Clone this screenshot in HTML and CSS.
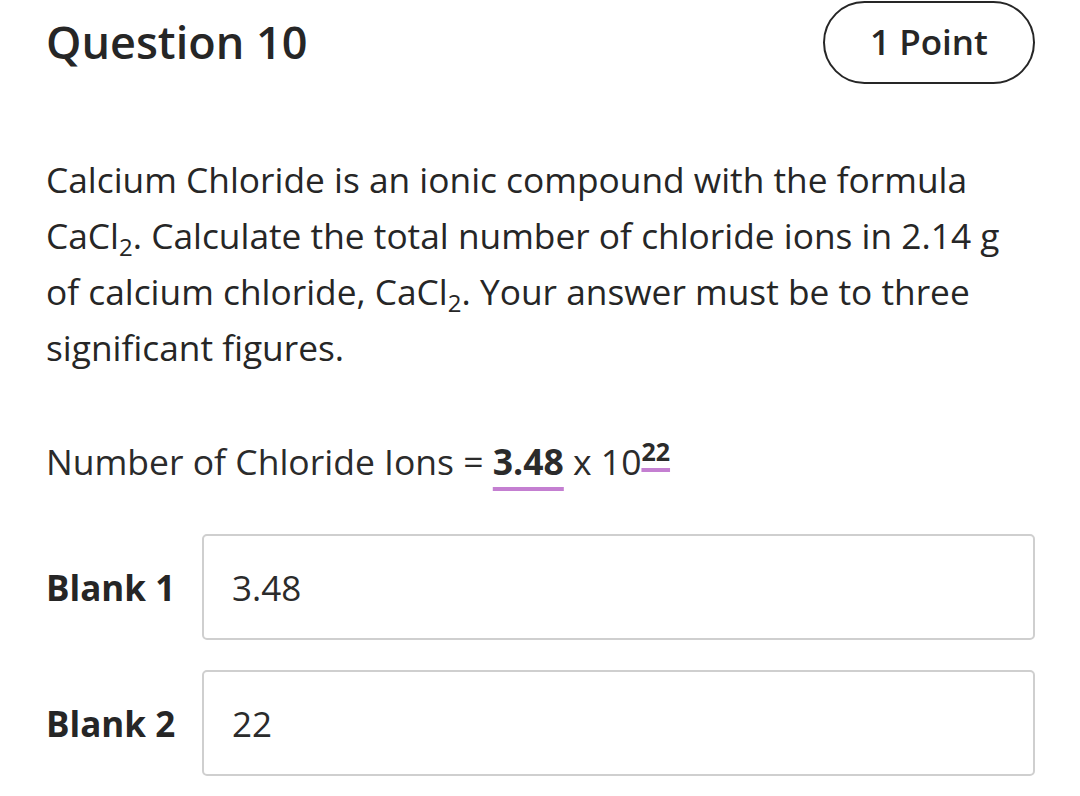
FILE: index.html
```html
<!DOCTYPE html>
<html>
<head>
<meta charset="utf-8">
<link rel="stylesheet" href="styles.css">
</head>
<body>
<div class="page">
  <header class="head">
    <h1 class="title">Question 10</h1>
    <div class="points">1 Point</div>
  </header>
  <p class="prompt">Calcium Chloride is an ionic compound with the formula CaCl<sub>2</sub>. Calculate the total number of chloride ions in 2.14 g of calcium chloride, CaCl<sub>2</sub>. Your answer must be to three significant figures.</p>
  <p class="equation">Number of Chloride Ions = <span class="blank">3.48</span> x 10<sup class="blank sup">22</sup></p>
  <div class="fields">
    <div class="field">
      <span class="label">Blank 1</span>
      <div class="input">3.48</div>
    </div>
    <div class="field">
      <span class="label">Blank 2</span>
      <div class="input">22</div>
    </div>
  </div>
</div>
</body>
</html>
```
FILE: styles.css
```css
html, body {
  margin: 0;
  padding: 0;
  background: #fff;
}
body {
  font-family: "Open Sans", "Noto Sans", sans-serif;
  color: #262626;
}
.page {
  padding: 0 46px 0 46px;
  width: 1080px;
  box-sizing: border-box;
}
.head {
  display: flex;
  justify-content: space-between;
  align-items: flex-start;
  padding-top: 1px;
}
.title {
  margin: 0;
  padding-top: 16px;
  font-size: 45px;
  font-weight: 600;
  line-height: 50px;
}
.points {
  box-sizing: border-box;
  width: 212px;
  height: 83px;
  border: 2px solid #262626;
  border-radius: 42px;
  display: flex;
  align-items: center;
  justify-content: center;
  font-size: 35px;
  font-weight: 600;
  margin-right: -1px;
  padding-bottom: 2px;
}
.prompt {
  margin: 67px 0 0 0;
  font-size: 35.3px;
  line-height: 56px;
}
.prompt sub {
  font-size: 24px;
  line-height: 0;
  vertical-align: -7px;
}
.equation {
  margin: 58px 0 0 0;
  font-size: 35.5px;
  line-height: 56px;
  color: #2b2b2b;
}
.blank {
  font-weight: 700;
  text-decoration: underline;
  text-decoration-color: #c47fd1;
  text-decoration-thickness: 4px;
  text-underline-offset: 12px;
}
.sup {
  font-size: 25px;
  line-height: 0;
  vertical-align: 14px;
  text-underline-offset: 7px;
}
.fields {
  margin-top: 45px;
  display: flex;
  flex-direction: column;
  gap: 30px;
}
.field {
  display: flex;
  align-items: center;
}
.label {
  width: 156px;
  font-size: 35px;
  font-weight: 700;
}
.input {
  flex: 1;
  box-sizing: border-box;
  height: 106px;
  border: 2px solid #cfcfcf;
  border-radius: 5px;
  padding-left: 28px;
  display: flex;
  align-items: center;
  font-size: 35px;
  color: #2b2b2b;
  margin-right: -1px;
}
```
